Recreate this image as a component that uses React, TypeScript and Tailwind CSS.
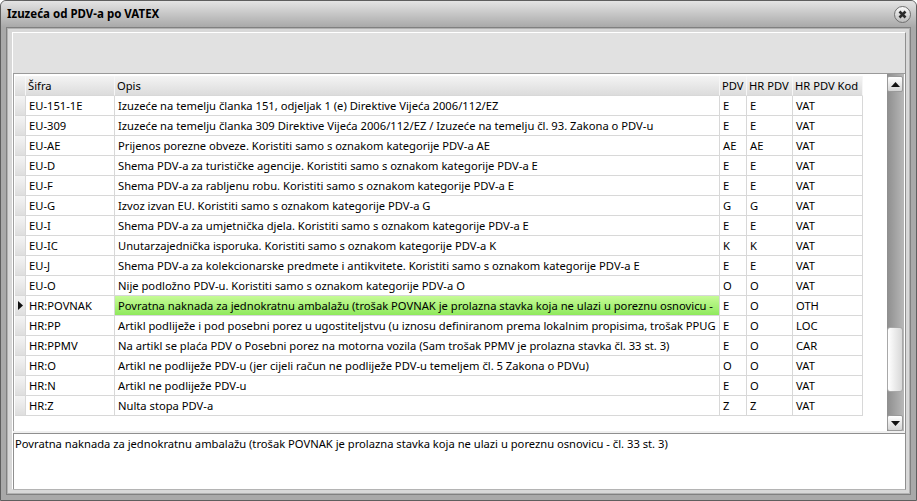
const rows = [
  ["EU-151-1E", "Izuzeće na temelju članka 151, odjeljak 1 (e) Direktive Vijeća 2006/112/EZ", "E", "E", "VAT"],
  ["EU-309", "Izuzeće na temelju članka 309 Direktive Vijeća 2006/112/EZ / Izuzeće na temelju čl. 93. Zakona o PDV-u", "E", "E", "VAT"],
  ["EU-AE", "Prijenos porezne obveze. Koristiti samo s oznakom kategorije PDV-a AE", "AE", "AE", "VAT"],
  ["EU-D", "Shema PDV-a za turističke agencije. Koristiti samo s oznakom kategorije PDV-a E", "E", "E", "VAT"],
  ["EU-F", "Shema PDV-a za rabljenu robu. Koristiti samo s oznakom kategorije PDV-a E", "E", "E", "VAT"],
  ["EU-G", "Izvoz izvan EU. Koristiti samo s oznakom kategorije PDV-a G", "G", "G", "VAT"],
  ["EU-I", "Shema PDV-a za umjetnička djela. Koristiti samo s oznakom kategorije PDV-a E", "E", "E", "VAT"],
  ["EU-IC", "Unutarzajednička isporuka. Koristiti samo s oznakom kategorije PDV-a K", "K", "K", "VAT"],
  ["EU-J", "Shema PDV-a za kolekcionarske predmete i antikvitete. Koristiti samo s oznakom kategorije PDV-a E", "E", "E", "VAT"],
  ["EU-O", "Nije podložno PDV-u. Koristiti samo s oznakom kategorije PDV-a O", "O", "O", "VAT"],
  ["HR:POVNAK", "Povratna naknada za jednokratnu ambalažu (trošak POVNAK je prolazna stavka koja ne ulazi u poreznu osnovicu -", "E", "O", "OTH"],
  ["HR:PP", "Artikl podliježe i pod posebni porez u ugostiteljstvu (u iznosu definiranom prema lokalnim propisima, trošak PPUG", "E", "O", "LOC"],
  ["HR:PPMV", "Na artikl se plaća PDV o Posebni porez na motorna vozila (Sam trošak PPMV je prolazna stavka čl. 33 st. 3)", "E", "O", "CAR"],
  ["HR:O", "Artikl ne podliježe PDV-u (jer cijeli račun ne podliježe PDV-u temeljem čl. 5 Zakona o PDVu)", "O", "O", "VAT"],
  ["HR:N", "Artikl ne podliježe PDV-u", "E", "O", "VAT"],
  ["HR:Z", "Nulta stopa PDV-a", "Z", "Z", "VAT"],
];

const selectedRow = 10;

const headCell = "flex items-center shrink-0 overflow-hidden whitespace-nowrap border-r border-b border-r-[#f6f6f6] border-b-[#d8d8d8] bg-gradient-to-b from-[#f4f4f4] to-[#dcdcdc] pl-[2px] pt-[1px]";
const cell = "flex items-center shrink-0 overflow-hidden whitespace-nowrap border-r border-b border-[#d8d8d8] pl-[3px] pt-[1px]";

function Arrow({ up }: { up?: boolean }) {
  return (
    <div className="w-[16px] h-[16px] shrink-0 flex items-center justify-center rounded-[2px] border border-[#9a9a9a] bg-gradient-to-b from-[#ffffff] to-[#d4d4d4]">
      <svg width="9" height="5" viewBox="0 0 9 5">
        <path d={up ? "M4.5 0 L9 5 L0 5 Z" : "M0 0 L9 0 L4.5 5 Z"} fill="#111" />
      </svg>
    </div>
  );
}

export default function App() {
  return (
    <div className="w-[917px] h-[501px] overflow-hidden flex flex-col rounded-t-[6px] border border-[#5e5e5e] bg-[#a9a9a9] text-[11.2px] text-black [font-family:'Noto_Sans','Liberation_Sans',sans-serif]">
      {/* Title bar */}
      <div className="h-[26px] shrink-0 flex items-center justify-between pl-[6px] pr-[5px] bg-gradient-to-b from-[#e4e4e4] to-[#a9a9a9]">
        <span className="font-bold text-[11.5px] text-black">Izuzeća od PDV-a po VATEX</span>
        <div className="w-[17px] h-[17px] rounded-full border border-[#6f6f6f] bg-gradient-to-b from-[#fafafa] to-[#bdbdbd] flex items-center justify-center">
          <svg width="9" height="9" viewBox="0 0 9 9">
            <path d="M1.5 1.5 L7.5 7.5 M7.5 1.5 L1.5 7.5" stroke="#2b2b2b" strokeWidth="2.6" />
          </svg>
        </div>
      </div>

      {/* Frame */}
      <div className="flex-1 min-h-0 mx-[5px] mb-[5px] flex border border-[#808080]">
        <div className="flex-1 min-w-0 flex border border-[#b2b2b2] bg-[#d8d8d8] pl-[4px] pt-[3px] pr-[3px] pb-[3px]">
          <div className="flex-1 min-w-0 flex flex-col border-l border-t border-r border-b border-l-white border-t-white border-r-[#8f8f8f] border-b-[#b4b4b4] bg-[#f0f0f0]">
            {/* Toolbar */}
            <div className="h-[41px] shrink-0 bg-[#e1e1e1] border-b border-[#9a9a9a]" />

            {/* Grid */}
            <div className="h-[357px] shrink-0 flex bg-white border-l border-[#a0a0a0]">
              <div className="flex-1 min-w-0 flex flex-col pl-[1px] pt-[2px]">
                <div className="flex h-[20px] shrink-0">
                  <div className={`${headCell} w-[11px]`} />
                  <div className={`${headCell} w-[89px]`}>Šifra</div>
                  <div className={`${headCell} w-[605px]`}>Opis</div>
                  <div className={`${headCell} w-[27px]`}>PDV</div>
                  <div className={`${headCell} w-[46px]`}>HR PDV</div>
                  <div className={`${headCell} w-[70px]`}>HR PDV Kod</div>
                </div>
                {rows.map((r, i) => (
                  <div key={r[0]} className="flex h-[20px] shrink-0">
                    <div className="w-[11px] shrink-0 flex items-center justify-center border-r border-b border-[#d8d8d8] bg-gradient-to-b from-[#f4f4f4] to-[#dedede]">
                      {i === selectedRow && (
                        <svg width="5" height="9" viewBox="0 0 5 9">
                          <path d="M0 0 L5 4.5 L0 9 Z" fill="#111" />
                        </svg>
                      )}
                    </div>
                    <div className={`${cell} w-[89px]`}>{r[0]}</div>
                    <div className={`${cell} w-[605px] ${i === selectedRow ? "bg-gradient-to-b from-[#c6fb96] to-[#8fe95c]" : ""}`}>{r[1]}</div>
                    <div className={`${cell} w-[27px]`}>{r[2]}</div>
                    <div className={`${cell} w-[46px]`}>{r[3]}</div>
                    <div className={`${cell} w-[70px]`}>{r[4]}</div>
                  </div>
                ))}
              </div>

              {/* Scrollbar */}
              <div className="w-[17px] shrink-0 mr-[1px] flex flex-col pt-[2px] bg-gradient-to-r from-[#8e8e8e] to-[#b8b8b8]">
                <Arrow up />
                <div className="flex-1 min-h-0 flex flex-col justify-end pb-[23px]">
                  <div className="w-[16px] h-[65px] rounded-[3px] border border-[#a8a8a8] bg-gradient-to-r from-[#ffffff] to-[#d8d8d8]" />
                </div>
                <Arrow />
              </div>
            </div>

            {/* Description */}
            <div className="flex-1 min-h-0 mt-[2px] border-t border-l border-[#8f8f8f] bg-white px-[1px] leading-[16px] pt-[2px]">
              Povratna naknada za jednokratnu ambalažu (trošak POVNAK je prolazna stavka koja ne ulazi u poreznu osnovicu - čl. 33 st. 3)
            </div>
          </div>
        </div>
      </div>
    </div>
  );
}
